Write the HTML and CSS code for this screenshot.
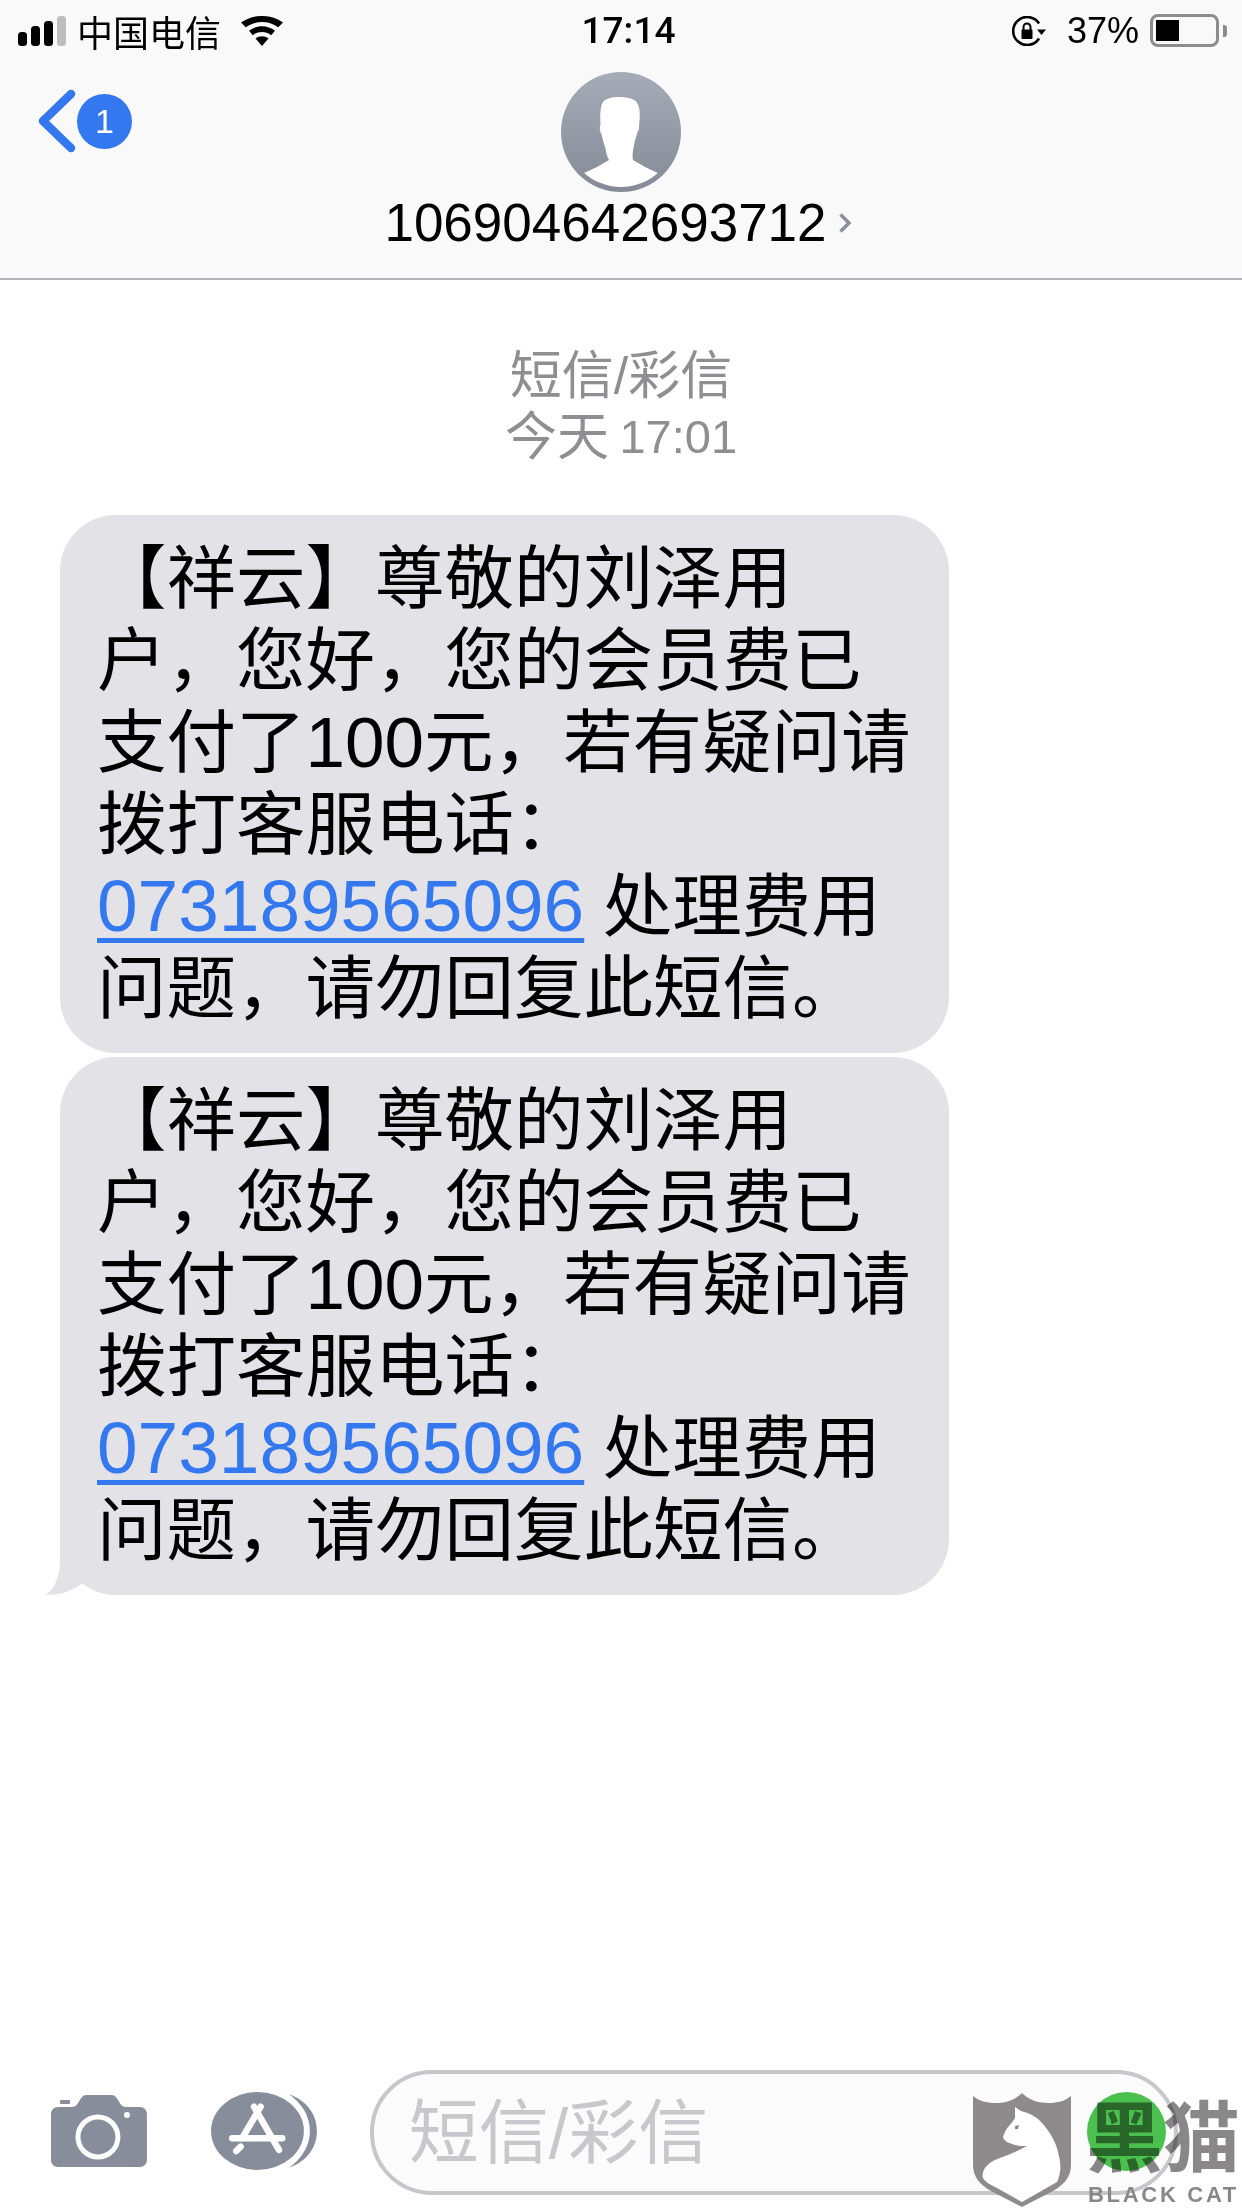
FILE: index.html
```html
<!DOCTYPE html>
<html lang="zh-CN">
<head>
<meta charset="utf-8">
<title>短信</title>
<link rel="stylesheet" href="styles.css">
</head>
<body>
<div class="phone">
  <header class="nav">
    <div class="status">
      <div class="status-left">
        <svg class="signal" viewBox="0 0 48 30" width="48" height="30">
          <rect x="0" y="16" width="9" height="14" rx="3.5" fill="#000"/>
          <rect x="13" y="10" width="9" height="20" rx="3.5" fill="#000"/>
          <rect x="26" y="5" width="9" height="25" rx="3.5" fill="#000"/>
          <rect x="39" y="0" width="9" height="30" rx="3.5" fill="#bdbdbd"/>
        </svg>
        <span class="carrier">中国电信</span>
        <svg class="wifi" viewBox="0 0 42 30" width="42" height="30">
          <path d="M21 30l-6.500-7.500c3.800-3 9.200-3 13 0z" fill="#000"/>
          <path d="M11.800 19.200l-3.800-4.400c7.500-6 18.500-6 26 0l-3.800 4.400c-5.500-4.300-12.900-4.300-18.400 0z" fill="#000"/>
          <path d="M4.800 11.300L0 6.500C12-2.200 30-2.200 42 6.500l-4.800 4.800C27.400 4.300 14.600 4.300 4.800 11.300z" fill="#000"/>
        </svg>
      </div>
      <div class="clock">17:14</div>
      <div class="status-right">
        <svg class="lock" viewBox="0 0 34 30" width="34" height="30">
          <path d="M27 22.500A14 14 0 1 1 27 7.500" fill="none" stroke="#000" stroke-width="2.600"/>
          <path d="M25 13.500h9l-4.500 5.500z" fill="#000"/>
          <rect x="9.500" y="13.500" width="11" height="9.500" rx="1" fill="#000"/>
          <path d="M11.500 14v-3a3.500 3.500 0 0 1 7 0v3" fill="none" stroke="#000" stroke-width="2"/>
        </svg>
        <span class="percent">37%</span>
        <div class="battery"><div class="battery-level" style="width:40%"></div></div>
        <div class="battery-nub"></div>
      </div>
    </div>
    <div class="contact">
      <div class="back">
        <svg class="chevron" viewBox="0 0 38 64" width="38" height="64">
          <path d="M33 5L5 32l28 27" fill="none" stroke="#3478f0" stroke-width="8.500" stroke-linecap="round" stroke-linejoin="round"/>
        </svg>
        <span class="badge">1</span>
      </div>
      <svg class="avatar" viewBox="0 0 120 120" width="120" height="120">
        <defs>
          <linearGradient id="avatarFill" x1="0" y1="0" x2="0" y2="1">
            <stop offset="0" stop-color="#a6abb8"/>
            <stop offset="1" stop-color="#858a97"/>
          </linearGradient>
          <clipPath id="avatarClip"><circle cx="60" cy="60" r="55"/></clipPath>
        </defs>
        <circle cx="60" cy="60" r="60" fill="url(#avatarFill)"/>
        <path clip-path="url(#avatarClip)" fill="#fff" d="M58 25C50 25 44 27 42 30C39 35 39 45 39.500 53C38 55 39 60 40.500 62C42 68 43 73 44.500 76C45 81 46 84 48 88C40 93 32 97 23 101L10 125H110L97 101C88 97 80 93 72 88C71 84 72 78 73 73C74 68 76 62 76.500 60C78 58 78.500 56 78 54C79 46 79 38 78 36C77 31 75 29 73 28C70 26 64 25 58 25z"/>
      </svg>
      <div class="name-row">
        <span class="name">106904642693712</span>
        <svg class="more" viewBox="0 0 14 22" width="14" height="22">
          <path d="M2.500 2.500L11 11l-8.500 8.500" fill="none" stroke="#8a8f9c" stroke-width="3.500"/>
        </svg>
      </div>
    </div>
  </header>

  <main class="thread">
    <div class="meta">
      <div>短信/彩信</div>
      <div>今天 <span class="meta-time">17:01</span></div>
    </div>
    <div class="bubble">【祥云】尊敬的刘泽用<br>户，您好，您的会员费已<br>支付了<span class="num">100</span>元，若有疑问请<br>拨打客服电话：<br><a class="num link">073189565096</a> 处理费用<br>问题，请勿回复此短信。</div>
    <div class="bubble has-tail"><svg class="tail" viewBox="0 0 40 60" width="40" height="60"><path d="M15 0V25C15 40 10 55 0 60C13 60 25 57 35 50L40 45V0z" fill="#e2e2e7"/></svg>【祥云】尊敬的刘泽用<br>户，您好，您的会员费已<br>支付了<span class="num">100</span>元，若有疑问请<br>拨打客服电话：<br><a class="num link">073189565096</a> 处理费用<br>问题，请勿回复此短信。</div>
  </main>

  <footer class="composer">
    <svg class="camera" viewBox="0 0 96 72" width="96" height="72">
      <rect x="9" y="5" width="10" height="4" rx="1" fill="#878d9a"/>
      <path d="M7 12h14c3 0 4-1 6-4l2-3c1.500-3 3.500-5 7-5h24c3.500 0 5.500 2 7 5l2 3c2 3 3 4 6 4h14c4 0 7 3 7 7v46c0 4-3 7-7 7H7c-4 0-7-3-7-7V19c0-4 3-7 7-7z" fill="#878d9a"/>
      <circle cx="47" cy="42" r="20" fill="none" stroke="#fff" stroke-width="5"/>
      <circle cx="76" cy="20" r="3" fill="#fff"/>
    </svg>
    <svg class="apps" viewBox="0 0 106 78" width="106" height="78">
      <ellipse cx="46.500" cy="39" rx="46.500" ry="39" fill="#878d9a"/>
      <path d="M78 2C96 9 106 22 106 39C106 56 96 69 78 76C90 67 99 55 99 39C99 23 90 11 78 2z" fill="#878d9a"/>
      <g fill="none" stroke="#fff" stroke-width="6.500" stroke-linecap="round">
        <path d="M21.300 46.300H71.300"/>
        <path d="M43 14.700L68 58"/>
        <path d="M49.700 14.700L31.300 46"/>
        <path d="M29.700 54.700L25.300 59"/>
      </g>
    </svg>
    <div class="input">短信/彩信</div>
  </footer>

  <div class="watermark">
    <svg class="shield" viewBox="0 0 98 114" width="98" height="114">
      <path fill="#8f8b8c" d="M0 3C6 8 14 10 22 10C33 10 42 7 49 0C56 7 65 10 76 10C84 10 92 8 98 3V72C98 85 90 92 80 98L49 114L18 98C8 92 0 85 0 72z"/>
      <path fill="#fff" d="M42 14L48 18C57 20 65 25 69 30C78 40 83 50 85 59C87 67 88 73 87 79C86 84 85 87 84 89L49 109L24 95C18 92 12 89 10 85C9 82 10 78 12 75C15 71 18 69 22 67C26 65 30 64 35 62C42 59 48 56 54 53C50 53 46 53 42 52C39 51 36 50 34 49C32 47 30 46 30 44C31 40 33 37 35 34C38 31 40 28 42 25z"/>
      <path fill="#8f8b8c" d="M42 33l4-1-1 4-3 0z"/>
    </svg>
    <div class="brand">
      <div class="brand-mark">
        <span class="brand-dot"></span>
        <span class="brand-cn">黑猫</span>
      </div>
      <div class="brand-en">BLACK CAT</div>
    </div>
  </div>
</div>
</body>
</html>
```
FILE: styles.css
```css
* { box-sizing: border-box; }
html, body { margin: 0; padding: 0; background: #fff; }
body { font-family: "Liberation Sans", "Noto Sans CJK SC", sans-serif; color: #000; }
.phone { position: relative; width: 1242px; height: 2208px; overflow: hidden; background: #fff; display: flex; flex-direction: column; }

.nav { height: 280px; background: #f9f9f9; border-bottom: 2px solid #b4b4b6; flex: none; }
.status { display: flex; align-items: center; height: 61px; padding: 0 15px 0 18px; }
.status-left { flex: 1; display: flex; align-items: center; }
.status-right { flex: 1; display: flex; align-items: center; justify-content: flex-end; }
.signal { display: block; }
.carrier { font-size: 36px; line-height: 40px; margin-left: 11px; font-family: "Noto Sans CJK SC", sans-serif; }
.wifi { display: block; margin-left: 20px; }
.clock { font-family: Roboto, "Liberation Sans", sans-serif; font-size: 37px; font-weight: 500; margin-left: 12px; line-height: 40px; }
.lock { display: block; margin-right: 21px; }
.percent { font-size: 36px; line-height: 40px; margin-right: 11px; }
.battery { width: 69px; height: 33px; border: 3px solid #8c8c8c; border-radius: 8px; padding: 3px; }
.battery-level { height: 100%; background: #000; }
.battery-nub { width: 4px; height: 12px; background: #8c8c8c; border-radius: 0 3px 3px 0; margin-left: 4px; }

.contact { position: relative; display: flex; flex-direction: column; align-items: center; padding-top: 11px; }
.back { position: absolute; left: 38px; top: 28px; display: flex; align-items: center; height: 64px; }
.chevron { display: block; }
.badge { width: 55px; height: 55px; margin-left: 1px; border-radius: 50%; background: #3478f0; color: #fff; font-size: 34px; display: flex; align-items: center; justify-content: center; }
.avatar { display: block; }
.name-row { display: flex; align-items: center; margin-top: 4px; height: 54px; margin-left: -6px; }
.name { font-size: 53px; line-height: 54px; }
.more { display: block; margin-left: 11px; }

.thread { flex: 1; display: flex; flex-direction: column; align-items: flex-start; padding: 66px 0 0 60px; }
.meta { width: 1242px; margin-left: -60px; margin-bottom: 47px; text-align: center; font-size: 52px; line-height: 61px; color: #8e8e93; }
.meta-time { font-size: 47px; line-height: 0; margin-left: -4px; vertical-align: 2px; }
.bubble { position: relative; width: 889px; height: 538px; margin-bottom: 4px; padding: 17px 0 0 37px; background: #e2e2e7; border-radius: 56px; font-family: "Noto Sans CJK SC", sans-serif; font-size: 69.500px; line-height: 82px; white-space: nowrap; }
.num { font-family: "Liberation Sans", sans-serif; font-size: 71px; line-height: 0; }
.link { font-size: 73px; margin-right: 3px; color: #3478f0; text-decoration: underline; text-decoration-thickness: 5px; text-underline-offset: 7px; }
.tail { position: absolute; left: -15px; bottom: 0; display: block; }

.composer { flex: none; height: 138px; display: flex; align-items: flex-start; padding: 0 64px 0 51px; }
.camera { display: block; margin-top: 25px; }
.apps { display: block; margin: 22px 0 0 64px; }
.input { width: 809px; height: 125px; margin-left: 53px; border: 4px solid #c6c6cc; border-radius: 62px; background: #fbfbfc; color: #c7c7cc; font-size: 70px; line-height: 121px; padding-left: 35px; font-family: "Liberation Sans", "Noto Sans CJK SC", sans-serif; }

.watermark { position: absolute; left: 973px; top: 2093px; width: 269px; display: flex; }
.shield { display: block; }
.brand { margin-left: 17px; width: 154px; }
.brand-mark { position: relative; height: 92px; }
.brand-dot { position: absolute; left: -1px; top: -1px; width: 79px; height: 79px; border-radius: 50%; background: #4cc04e; }
.brand-cn { position: absolute; left: -2px; top: 0; font-size: 77px; line-height: 80px; font-weight: 700; color: #8a8788; mix-blend-mode: multiply; white-space: nowrap; font-family: "Noto Sans CJK SC", sans-serif; }
.brand-en { font-size: 22px; line-height: 20px; font-weight: 700; color: #8a8788; letter-spacing: 2.700px; white-space: nowrap; }
```
